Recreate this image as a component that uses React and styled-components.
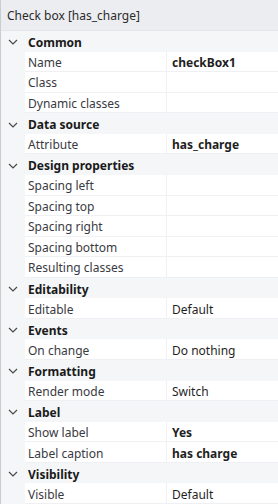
import styled, { createGlobalStyle } from 'styled-components';

const GlobalStyle = createGlobalStyle`
  html, body {
    margin: 0;
    padding: 0;
    background: #f4f6f8;
  }
  body {
    font-family: 'Noto Sans', 'Open Sans', sans-serif;
  }
`;

const Panel = styled.div`
  width: 278px;
  height: 504px;
  overflow: hidden;
  background: #f4f6f8;
  border-left: 1px solid #c9ccd0;
  box-sizing: border-box;
`;

const TitleBar = styled.div`
  height: 31px;
  display: flex;
  align-items: center;
  padding-left: 6px;
  background: #ebedf0;
  border-bottom: 1px solid #e2e5e9;
  box-sizing: border-box;
  font-size: 12px;
  color: #2b2b2b;
`;

const HeaderRow = styled.div`
  height: 20.57px;
  display: flex;
  align-items: center;
  padding-top: 2px;
  box-sizing: border-box;
  font-size: 12px;
  font-weight: 700;
  color: #1a1a1a;
`;

const Chevron = styled.span`
  width: 27px;
  display: flex;
  align-items: center;
  padding-left: 7px;
  box-sizing: border-box;
`;

const PropRow = styled.div`
  height: 20.57px;
  display: grid;
  grid-template-columns: 24px 141px 1fr;
  box-sizing: border-box;
  font-size: 12px;
`;

const Gutter = styled.div`
  background: #f4f6f8;
`;

const Cell = styled.div`
  display: flex;
  align-items: center;
  padding-top: 2px;
  box-sizing: border-box;
  background: #ffffff;
  border-bottom: 1px solid #eef0f3;
  padding-left: ${p => (p.$value ? '5px' : '3px')};
  border-left: ${p => (p.$value ? '1px solid #eef0f3' : 'none')};
  font-weight: ${p => (p.$bold ? 700 : 400)};
  color: ${p => (p.$value ? '#1f1f1f' : '#3a3a42')};
  white-space: nowrap;
  overflow: hidden;
`;

const sections = [
  {
    title: 'Common',
    rows: [
      ['Name', 'checkBox1', true],
      ['Class', ''],
      ['Dynamic classes', ''],
    ],
  },
  { title: 'Data source', rows: [['Attribute', 'has_charge', true]] },
  {
    title: 'Design properties',
    rows: [
      ['Spacing left', ''],
      ['Spacing top', ''],
      ['Spacing right', ''],
      ['Spacing bottom', ''],
      ['Resulting classes', ''],
    ],
  },
  { title: 'Editability', rows: [['Editable', 'Default']] },
  { title: 'Events', rows: [['On change', 'Do nothing']] },
  { title: 'Formatting', rows: [['Render mode', 'Switch']] },
  {
    title: 'Label',
    rows: [
      ['Show label', 'Yes', true],
      ['Label caption', 'has charge', true],
    ],
  },
  { title: 'Visibility', rows: [['Visible', 'Default']] },
];

const ChevronIcon = () => (
  <svg width="10" height="6" viewBox="0 0 10 6">
    <path d="M1 1 L5 5 L9 1" fill="none" stroke="#4a4a4a" strokeWidth="1.2" />
  </svg>
);

export default function App() {
  return (
    <>
      <GlobalStyle />
      <Panel>
        <TitleBar>Check box [has_charge]</TitleBar>
        {sections.map(section => (
          <div key={section.title}>
            <HeaderRow>
              <Chevron>
                <ChevronIcon />
              </Chevron>
              {section.title}
            </HeaderRow>
            {section.rows.map(([label, value, bold]) => (
              <PropRow key={label}>
                <Gutter />
                <Cell>{label}</Cell>
                <Cell $value $bold={bold}>{value}</Cell>
              </PropRow>
            ))}
          </div>
        ))}
      </Panel>
    </>
  );
}
